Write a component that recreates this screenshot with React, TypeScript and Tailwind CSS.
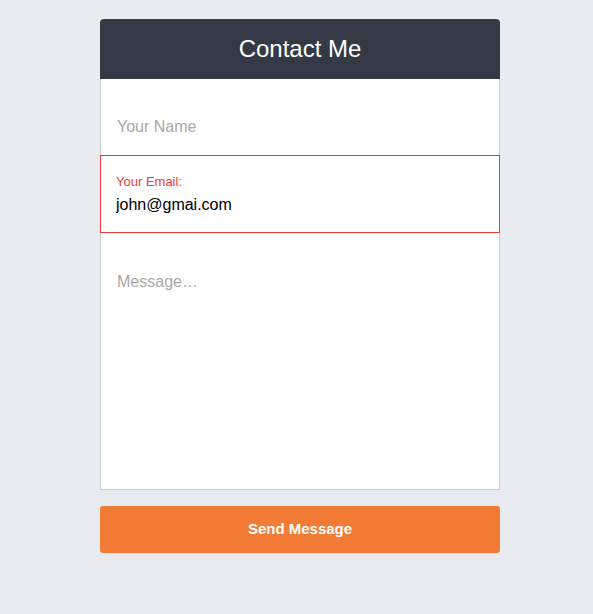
export default function App() {
  return (
    <div
      className="min-h-screen bg-[#e8ebf0] pt-[19px]"
      style={{ fontFamily: '"Liberation Sans", Arial, sans-serif' }}
    >
      <form className="ml-[100px] w-[400px]" onSubmit={(e) => e.preventDefault()}>
        <div className="flex h-[60px] items-center justify-center rounded-t-[4px] bg-[#333a46]">
          <h1 className="text-[24px] leading-none text-white">Contact Me</h1>
        </div>

        {/* Name */}
        <div className="h-[76px] border-x border-[#c9cdd3] bg-white px-[16px] pt-[39px]">
          <input
            type="text"
            placeholder="Your Name"
            className="block h-[18px] w-full bg-transparent text-[16px] leading-[18px] text-black outline-none placeholder:text-[#a9a9a9]"
          />
        </div>

        {/* Email, flagged invalid */}
        <label className="block h-[78px] border border-[#ee3a3a] bg-white px-[15px] pt-[18px]">
          <span className="block text-[13px] leading-[15px] text-[#ee3a3a]">Your Email:</span>
          <input
            type="email"
            defaultValue="john@gmai.com"
            className="mt-[7px] block h-[18px] w-full bg-transparent text-[16px] leading-[18px] text-black outline-none"
          />
        </label>

        {/* Message */}
        <div className="h-[257px] border-x border-b border-[#c9cdd3] bg-white px-[16px] pt-[40px]">
          <textarea
            placeholder="Message…"
            className="block h-[200px] w-full resize-none bg-transparent text-[16px] leading-[18px] text-black outline-none placeholder:text-[#a9a9a9]"
          />
        </div>

        <button
          type="submit"
          className="mt-[16px] flex h-[47px] w-full items-center justify-center rounded-[3px] bg-[#f27b35] text-[15px] font-bold text-white"
        >
          Send Message
        </button>
      </form>
    </div>
  );
}
